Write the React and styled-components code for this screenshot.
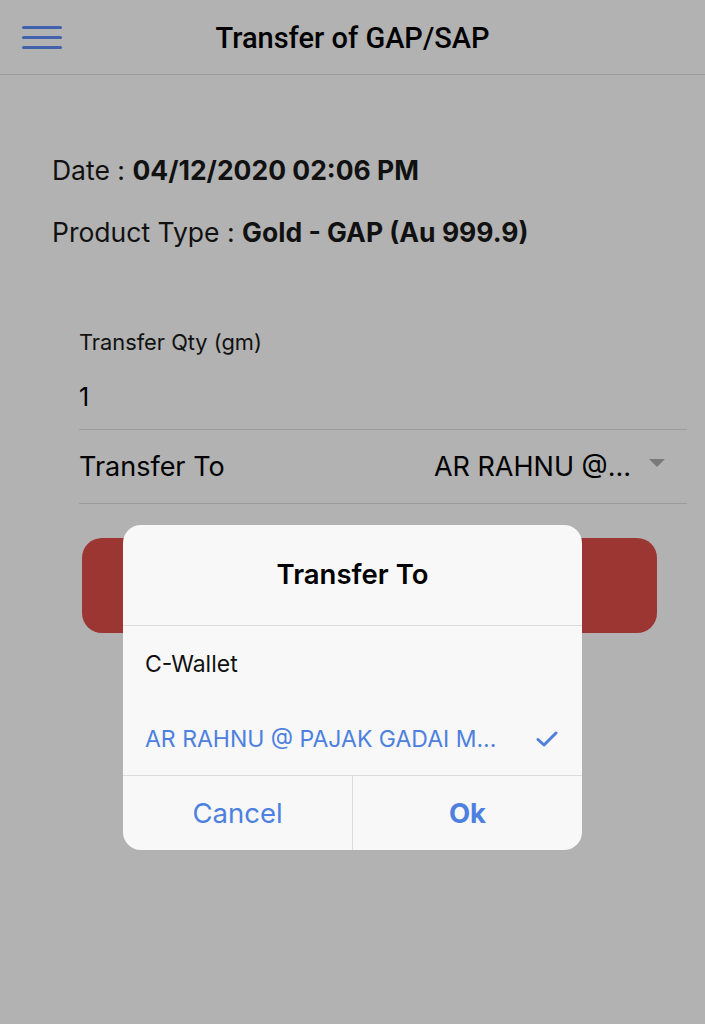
import styled, { createGlobalStyle } from "styled-components"

const GlobalStyle = createGlobalStyle`
  html, body {
    margin: 0;
    padding: 0;
    background: #b2b2b2;
    font-family: Inter, "Liberation Sans", sans-serif;
    color: #000;
  }
  * { box-sizing: border-box; }
`

const Page = styled.div`
  position: relative;
  width: 705px;
  height: 1024px;
  background: #b2b2b2;
  overflow: hidden;
`
const Header = styled.div`
  height: 75px;
  display: flex;
  align-items: center;
  justify-content: center;
  position: relative;
  border-bottom: 1px solid #9d9d9d;
`
const MenuButton = styled.div`
  position: absolute;
  left: 22px;
  top: 26px;
  width: 40px;
  display: flex;
  flex-direction: column;
  gap: 7px;
`
const MenuLine = styled.span`
  display: block;
  height: 3px;
  border-radius: 2px;
  background: #4262ad;
`
const HeaderTitle = styled.h1`
  margin: 0;
  font-family: Roboto, sans-serif;
  font-size: 29px;
  font-weight: 500;
  margin-top: 1px;
`
const Info = styled.div`
  padding: 79px 0 0 52px;
  display: flex;
  flex-direction: column;
  gap: 30px;
`
const InfoLine = styled.div`
  font-size: 26.5px;
  line-height: 32px;
  color: #111;
  b { font-weight: 700; }
`
const Form = styled.div`
  margin: 80px 18px 0 79px;
`
const FieldLabel = styled.div`
  font-size: 21.8px;
  line-height: 28px;
  color: #111;
`
const FieldValue = styled.div`
  font-size: 25px;
  line-height: 30px;
  padding: 26px 0 17px;
  border-bottom: 1px solid #9c9c9c;
`
const SelectRow = styled.div`
  height: 74px;
  display: flex;
  align-items: center;
  justify-content: space-between;
  border-bottom: 1px solid #9c9c9c;
  font-size: 27px;
`
const SelectValue = styled.div`
  display: flex;
  align-items: center;
  gap: 18px;
  padding-right: 22px;
`
const Caret = styled.span`
  width: 0;
  height: 0;
  border-left: 8px solid transparent;
  border-right: 8px solid transparent;
  border-top: 8px solid #7a7a7a;
  margin-top: -8px;
`
const SubmitButton = styled.div`
  margin: 34px 48px 0 82px;
  height: 95px;
  border-radius: 20px;
  background: #9c3633;
`
const Dialog = styled.div`
  position: absolute;
  left: 123px;
  top: 525px;
  width: 459px;
  background: #f8f8f8;
  border-radius: 18px;
  overflow: hidden;
`
const DialogTitle = styled.div`
  height: 101px;
  display: flex;
  align-items: center;
  justify-content: center;
  font-size: 27.5px;
  font-weight: 600;
  border-bottom: 1px solid #dcdcdc;
  padding-bottom: 2px;
`
const Option = styled.div`
  height: ${(p) => p.$h}px;
  display: flex;
  align-items: center;
  justify-content: space-between;
  padding: 0 24px 0 22px;
  font-size: 23px;
  color: ${(p) => (p.$active ? "#4d80df" : "#111")};
`
const Options = styled.div`
  border-bottom: 1px solid #dcdcdc;
`
const Actions = styled.div`
  display: grid;
  grid-template-columns: 229px 1fr;
  height: 74px;
`
const Action = styled.div`
  display: flex;
  align-items: center;
  justify-content: center;
  font-size: 27.5px;
  color: #4d80df;
  font-weight: ${(p) => (p.$bold ? 700 : 400)};
  border-left: ${(p) => (p.$divider ? "1px solid #dcdcdc" : "none")};
`

const App = () => {
  return (
    <Page>
      <GlobalStyle />
      <Header>
        <MenuButton>
          <MenuLine />
          <MenuLine />
          <MenuLine />
        </MenuButton>
        <HeaderTitle>Transfer of GAP/SAP</HeaderTitle>
      </Header>

      <Info>
        <InfoLine>
          Date : <b>04/12/2020 02:06 PM</b>
        </InfoLine>
        <InfoLine>
          Product Type : <b>Gold - GAP (Au 999.9)</b>
        </InfoLine>
      </Info>

      <Form>
        <FieldLabel>Transfer Qty (gm)</FieldLabel>
        <FieldValue>1</FieldValue>
        <SelectRow>
          <span>Transfer To</span>
          <SelectValue>
            AR RAHNU @...
            <Caret />
          </SelectValue>
        </SelectRow>
      </Form>

      <SubmitButton />

      <Dialog>
        <DialogTitle>Transfer To</DialogTitle>
        <Options>
          <Option $h={76}>C-Wallet</Option>
          <Option $h={73} $active>
            AR RAHNU @ PAJAK GADAI M...
            <svg width="22" height="16" viewBox="0 0 22 16">
              <path d="M2 8.5 L8 14 L20 2" fill="none" stroke="#4d80df" strokeWidth="3" strokeLinecap="round" strokeLinejoin="round" />
            </svg>
          </Option>
        </Options>
        <Actions>
          <Action>Cancel</Action>
          <Action $bold $divider>Ok</Action>
        </Actions>
      </Dialog>
    </Page>
  )
}

export default App
